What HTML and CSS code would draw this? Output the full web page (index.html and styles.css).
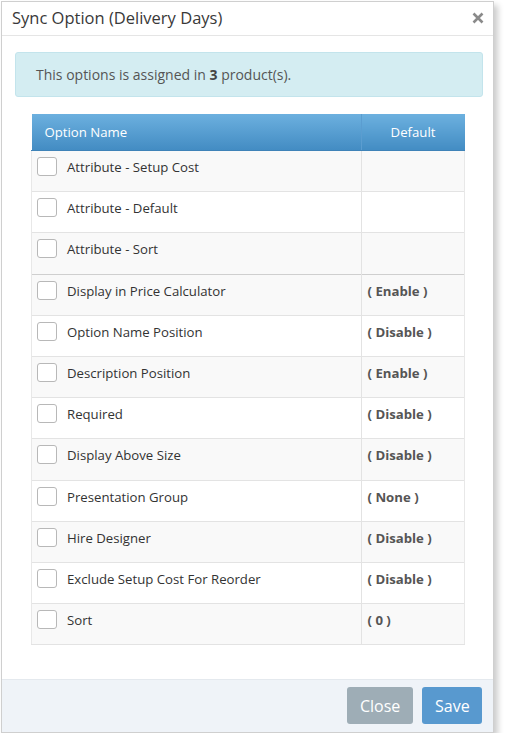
FILE: index.html
```html
<!DOCTYPE html>
<html>
<head>
<meta charset="utf-8">
<link rel="stylesheet" href="styles.css">
</head>
<body>
<div class="modal">
  <div class="modal-header">
    <span class="modal-title">Sync Option (Delivery Days)</span>
    <svg class="close-x" width="12" height="12" viewBox="0 0 12 12"><path d="M1.5 1.5 L10.5 10.5 M10.5 1.5 L1.5 10.5" stroke="#8a8a8a" stroke-width="2.6" stroke-linecap="butt"/></svg>
  </div>
  <div class="modal-body">
    <div class="alert">This options is assigned in <b>3</b> product(s).</div>
    <table class="opt-table">
      <thead>
        <tr><th class="col-name">Option Name</th><th class="col-def">Default</th></tr>
      </thead>
      <tbody>
        <tr><td><span class="cb"></span><span class="lbl">Attribute - Setup Cost</span></td><td></td></tr>
        <tr><td><span class="cb"></span><span class="lbl">Attribute - Default</span></td><td></td></tr>
        <tr><td><span class="cb"></span><span class="lbl">Attribute - Sort</span></td><td></td></tr>
      </tbody>
      <tbody>
        <tr><td><span class="cb"></span><span class="lbl">Display in Price Calculator</span></td><td class="val">( Enable )</td></tr>
        <tr><td><span class="cb"></span><span class="lbl">Option Name Position</span></td><td class="val">( Disable )</td></tr>
        <tr><td><span class="cb"></span><span class="lbl">Description Position</span></td><td class="val">( Enable )</td></tr>
        <tr><td><span class="cb"></span><span class="lbl">Required</span></td><td class="val">( Disable )</td></tr>
        <tr><td><span class="cb"></span><span class="lbl">Display Above Size</span></td><td class="val">( Disable )</td></tr>
        <tr><td><span class="cb"></span><span class="lbl">Presentation Group</span></td><td class="val">( None )</td></tr>
        <tr><td><span class="cb"></span><span class="lbl">Hire Designer</span></td><td class="val">( Disable )</td></tr>
        <tr><td><span class="cb"></span><span class="lbl">Exclude Setup Cost For Reorder</span></td><td class="val">( Disable )</td></tr>
        <tr><td><span class="cb"></span><span class="lbl">Sort</span></td><td class="val">( 0 )</td></tr>
      </tbody>
    </table>
  </div>
  <div class="modal-footer">
    <button class="btn btn-close">Close</button>
    <button class="btn btn-save">Save</button>
  </div>
</div>
</body>
</html>
```

FILE: styles.css
```css
html, body {
  margin: 0;
  padding: 0;
  background: #ffffff;
}
body {
  font-family: "Open Sans", "Noto Sans", sans-serif;
  color: #393939;
  padding: 1px 0 0 1px;
}
.modal {
  width: 491px;
  border: 1px solid #cfcfcf;
  background: #fff;
  box-shadow: 4px 4px 6px rgba(0,0,0,0.2);
}
.modal-header {
  height: 33px;
  border-bottom: 1px solid #e5e5e5;
  display: flex;
  align-items: center;
  justify-content: space-between;
  padding: 0 9px 0 10px;
}
.modal-title {
  font-size: 16.5px;
  color: #393939;
  line-height: 20px;
  margin-top: -2px;
}
.close-x {
  display: block;
  margin-top: -1px;
}
.modal-body {
  padding: 16px 10px 34px 13px;
}
.alert {
  height: 45px;
  box-sizing: border-box;
  background: #d4edf2;
  border: 1px solid #c3e4ec;
  border-radius: 3px;
  font-size: 14px;
  line-height: 43px;
  color: #555;
  padding: 0 0 0 20px;
  margin-bottom: 17px;
}
.alert b { font-weight: bold; color: #444; }
.opt-table {
  margin: 0 16px;
  width: 434px;
  border-collapse: collapse;
  font-size: 13.2px;
}
.opt-table th {
  height: 36px;
  background: linear-gradient(#6cb0df, #438cc3);
  color: #fff;
  font-weight: normal;
  text-align: left;
  padding: 0 0 0 13px;
  border-bottom: 1px solid #3f83b8;
}
.opt-table th.col-name { width: 316px; border-right: 1px solid #5b9dd0; }
.opt-table th.col-def { text-align: center; padding: 0; }
.opt-table td {
  height: 41.2px;
  box-sizing: border-box;
  vertical-align: top;
  padding: 6px 6px 0 4px;
  border-top: 1px solid #e3e3e3;
  color: #333;
  line-height: 20px;
}
.opt-table td + td {
  border-left: 1px solid #e3e3e3;
  padding-left: 6px;
}
.opt-table tbody tr:nth-child(odd) td { background: #f9f9f9; }
.opt-table tbody + tbody tr:first-child td { border-top: 1px solid #cfcfcf; }
.opt-table tbody:last-child tr:last-child td { border-bottom: 1px solid #e3e3e3; }
.opt-table td:first-child { border-left: 1px solid #e8e8e8; }
.opt-table td:last-child { border-right: 1px solid #e8e8e8; }
.cb {
  display: inline-block;
  width: 18px;
  height: 17px;
  border: 1px solid #b8b8b8;
  border-radius: 3px;
  background: #fff;
  vertical-align: top;
  margin-left: 1px;
}
.lbl {
  display: inline-block;
  margin-left: 10px;
  line-height: 20px;
}
.val {
  font-weight: bold;
  color: #555 !important;
}
.modal-footer {
  height: 52px;
  background: #eff3f8;
  border-top: 1px solid #e4e9ee;
  display: flex;
  justify-content: flex-end;
  align-items: center;
  gap: 9px;
  padding: 0 11px 0 0;
}
.btn {
  font-family: "Open Sans", "Noto Sans", sans-serif;
  font-size: 16px;
  color: #fff;
  border: none;
  border-radius: 3px;
  height: 37px;
  padding: 0 13px;
  margin-top: -1px;
}
.btn-close { background: #9eadb6; width: 66px; }
.btn-save { background: #5899cf; width: 60px; }
```
